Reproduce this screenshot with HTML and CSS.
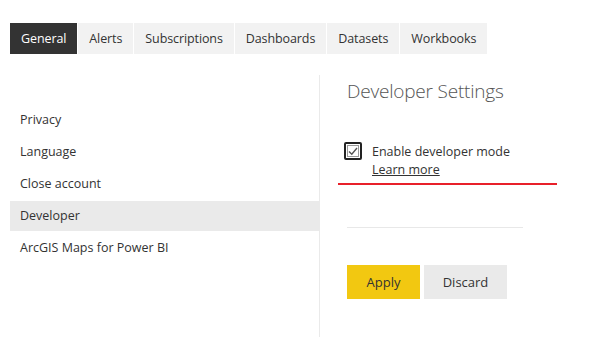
FILE: index.html
```html
<!DOCTYPE html>
<html>
<head>
<meta charset="utf-8">
<link rel="stylesheet" href="styles.css">
</head>
<body>
<div class="tabs">
  <div class="tab active">General</div>
  <div class="tab">Alerts</div>
  <div class="tab">Subscriptions</div>
  <div class="tab">Dashboards</div>
  <div class="tab">Datasets</div>
  <div class="tab">Workbooks</div>
</div>
<div class="main">
  <nav class="nav">
    <div class="nav-item">Privacy</div>
    <div class="nav-item">Language</div>
    <div class="nav-item">Close account</div>
    <div class="nav-item selected">Developer</div>
    <div class="nav-item">ArcGIS Maps for Power BI</div>
  </nav>
  <section class="content">
    <h1 class="title">Developer Settings</h1>
    <div class="option">
      <span class="checkbox">
        <svg width="12" height="12" viewBox="0 0 12 12"><path d="M2 6.5 L4.8 9.2 L10 3" fill="none" stroke="#555" stroke-width="1.4"/></svg>
      </span>
      <div class="option-text">
        <div>Enable developer mode</div>
        <a class="link">Learn more</a>
      </div>
    </div>
    <div class="redline"></div>
    <div class="divider"></div>
    <div class="buttons">
      <button class="btn apply">Apply</button>
      <button class="btn discard">Discard</button>
    </div>
  </section>
</div>
</body>
</html>
```
FILE: styles.css
```css
* { box-sizing: border-box; }
html, body { margin: 0; padding: 0; background: #fff; }
body {
  font-family: "Open Sans", "Noto Sans", sans-serif;
  font-size: 12.5px;
  color: #333;
  width: 600px;
  height: 337px;
  overflow: hidden;
}
.tabs {
  display: flex;
  gap: 1px;
  margin: 23px 0 0 10px;
  height: 31px;
}
.tab {
  background: #f2f2f2;
  color: #333;
  padding: 0 11px;
  display: flex;
  align-items: center;
  height: 31px;
  letter-spacing: -0.1px;
}
.tab.active { background: #333; color: #fff; }
.main {
  display: flex;
  margin-top: 21px;
  height: 262px;
}
.nav {
  width: 310px;
  margin-left: 10px;
  padding-top: 29px;
  border-right: 1px solid #eaeaea;
}
.nav-item {
  height: 32px;
  line-height: 32px;
  padding-left: 10px;
  color: #333;
}
.nav-item.selected { background: #eaeaea; height: 30px; line-height: 30px; margin: 1px 0; }
.content {
  padding-left: 27px;
  flex: 1;
}
.title {
  font-weight: 300;
  font-size: 19px;
  color: #555;
  margin: 3px 0 0 0;
  letter-spacing: -0.2px;
}
.option {
  display: flex;
  margin-top: 38px;
  margin-left: -3px;
}
.checkbox {
  width: 18px;
  height: 18px;
  border: 2px solid #222;
  border-radius: 2px;
  display: flex;
  align-items: center;
  justify-content: center;
  box-shadow: inset 0 0 0 1px #fff, inset 0 0 0 2px #999;
}
.option-text {
  margin-left: 10px;
  line-height: 18px;
  margin-top: 1px;
}
.link {
  color: #333;
  text-decoration: underline;
}
.redline {
  width: 219px;
  height: 2px;
  background: #e8202a;
  margin-left: -9px;
  margin-top: 4px;
}
.divider {
  width: 176px;
  height: 1px;
  background: #e8e8e8;
  margin-top: 42px;
}
.buttons {
  display: flex;
  gap: 4px;
  margin-top: 37px;
}
.btn {
  font-family: inherit;
  font-size: 13px;
  border: none;
  height: 34px;
  color: #333;
}
.apply { background: #f2c811; width: 73px; }
.discard { background: #eaeaea; width: 83px; }
```
